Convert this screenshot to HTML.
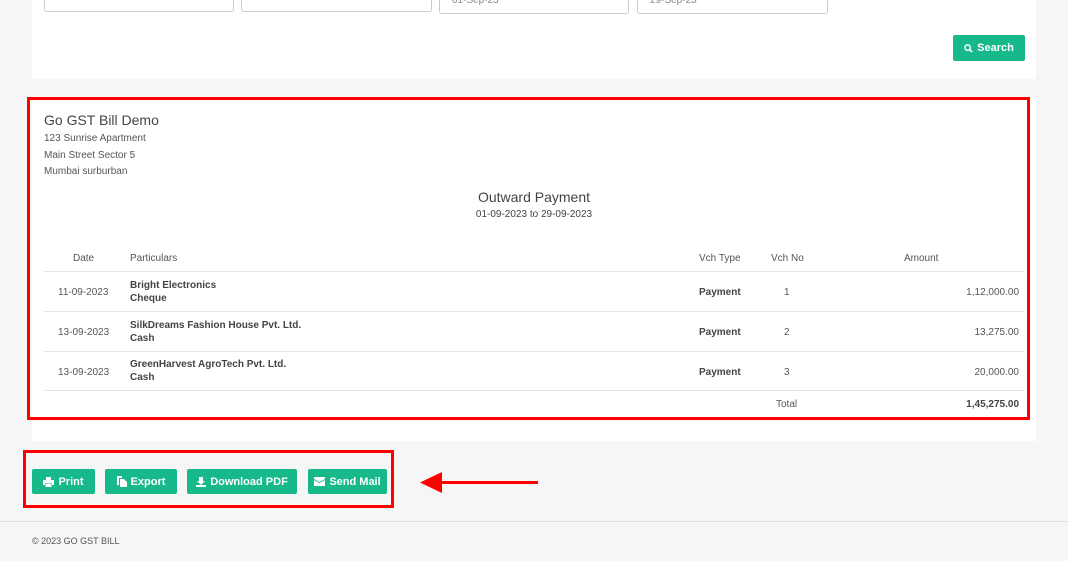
<!DOCTYPE html>
<html><head><style>
*{margin:0;padding:0;box-sizing:border-box}
body{width:1068px;height:561px;background:#f6f6f6;font-family:"Liberation Sans",sans-serif;color:#555;position:relative;overflow:hidden;font-size:10px}
.a{position:absolute;white-space:nowrap}
.card{position:absolute;background:#fff}
.inp{position:absolute;border:1px solid #ccc;border-radius:3px;background:#fff;top:-8px;height:20px;font-size:10px;color:#888;padding:2px 12px 0}
.btn{position:absolute;background:#17b98a;color:#fff;font-weight:bold;font-size:11px;height:25px;border-radius:2px;display:flex;align-items:center;justify-content:center;gap:4px}
.line{position:absolute;left:44px;width:980px;height:1px;background:#e3e3e3}
.b{font-weight:bold;color:#444;line-height:13px}
</style></head><body>
<div class="card" style="left:32px;top:0;width:1004px;height:79px"></div>
<div class="inp" style="left:44px;width:190px"></div>
<div class="inp" style="left:241px;width:191px"></div>
<div class="inp" style="left:439px;width:190px;height:22px">01-Sep-23</div>
<div class="inp" style="left:637px;width:191px;height:22px">29-Sep-23</div>
<div class="btn" style="left:953px;top:35px;width:72px;height:26px"><svg width="9" height="9" viewBox="0 0 10 10"><circle cx="4" cy="4" r="3" fill="none" stroke="#fff" stroke-width="1.6"/><path d="M6 6L9 9" stroke="#fff" stroke-width="1.8"/></svg>Search</div>

<div class="card" style="left:32px;top:99px;width:1004px;height:342px"></div>
<div class="a" style="left:27px;top:97px;width:1003px;height:323px;border:3px solid #f00"></div>
<div class="a" style="left:44px;top:112px;font-size:14px;color:#444">Go GST Bill Demo</div>
<div class="a" style="left:44px;top:133px;font-size:10px">123 Sunrise Apartment</div>
<div class="a" style="left:44px;top:150px;font-size:10px">Main Street Sector 5</div>
<div class="a" style="left:44px;top:166px;font-size:10px">Mumbai surburban</div>
<div class="a" style="left:0;width:1068px;text-align:center;top:189px;font-size:14px;color:#444">Outward Payment</div>
<div class="a" style="left:0;width:1068px;text-align:center;top:209px;font-size:10px;color:#444">01-09-2023 to 29-09-2023</div>

<div class="a" style="left:73px;top:253px">Date</div>
<div class="a" style="left:130px;top:253px">Particulars</div>
<div class="a" style="left:699px;top:253px">Vch Type</div>
<div class="a" style="left:771px;top:253px">Vch No</div>
<div class="a" style="left:904px;top:253px">Amount</div>
<div class="line" style="top:271px"></div>
<div class="line" style="top:311px"></div>
<div class="line" style="top:351px"></div>
<div class="line" style="top:390px"></div>

<div class="a" style="left:58px;top:287px">11-09-2023</div>
<div class="a b" style="left:130px;top:279px">Bright Electronics<br>Cheque</div>
<div class="a b" style="left:699px;top:286px">Payment</div>
<div class="a" style="left:784px;top:287px">1</div>
<div class="a" style="right:49px;top:287px">1,12,000.00</div>

<div class="a" style="left:58px;top:327px">13-09-2023</div>
<div class="a b" style="left:130px;top:319px">SilkDreams Fashion House Pvt. Ltd.<br>Cash</div>
<div class="a b" style="left:699px;top:326px">Payment</div>
<div class="a" style="left:784px;top:327px">2</div>
<div class="a" style="right:49px;top:327px">13,275.00</div>

<div class="a" style="left:58px;top:367px">13-09-2023</div>
<div class="a b" style="left:130px;top:358px">GreenHarvest AgroTech Pvt. Ltd.<br>Cash</div>
<div class="a b" style="left:699px;top:366px">Payment</div>
<div class="a" style="left:784px;top:367px">3</div>
<div class="a" style="right:49px;top:367px">20,000.00</div>

<div class="a" style="left:776px;top:399px">Total</div>
<div class="a b" style="right:49px;top:398px">1,45,275.00</div>

<div class="a" style="left:23px;top:450px;width:371px;height:58px;border:3px solid #f00"></div>
<div class="btn" style="left:32px;top:469px;width:63px"><svg width="11" height="10" viewBox="0 0 11 10"><path d="M3 0h5v3H3z M0 3h11v5H9V6H2v2H0z M2.5 6.5h6V10h-6z" fill="#fff"/></svg>Print</div>
<div class="btn" style="left:105px;top:469px;width:72px"><svg width="10" height="11" viewBox="0 0 10 11"><path d="M0 0h5v2H2v7H0z M3 3h4l3 3v5H3z" fill="#fff"/></svg>Export</div>
<div class="btn" style="left:187px;top:469px;width:110px"><svg width="10" height="10" viewBox="0 0 10 10"><path d="M3 0h4v4h2L5 8 1 4h2z M0 8h10v2H0z" fill="#fff"/></svg>Download PDF</div>
<div class="btn" style="left:308px;top:469px;width:79px"><svg width="11" height="9" viewBox="0 0 11 9"><path d="M0 0h11v2L5.5 5 0 2z M0 3l5.5 3L11 3v6H0z" fill="#fff"/></svg>Send Mail</div>
<svg class="a" style="left:418px;top:470px" width="124" height="26"><path d="M22 12.5H120" stroke="#f00" stroke-width="3"/><path d="M2 12.5L24 2v21z" fill="#f00"/></svg>

<div class="a" style="left:0;top:521px;width:1068px;height:1px;background:#e0e0e0"></div>
<div class="a" style="left:32px;top:536px;font-size:9px">© 2023 GO GST BILL</div>
</body></html>
